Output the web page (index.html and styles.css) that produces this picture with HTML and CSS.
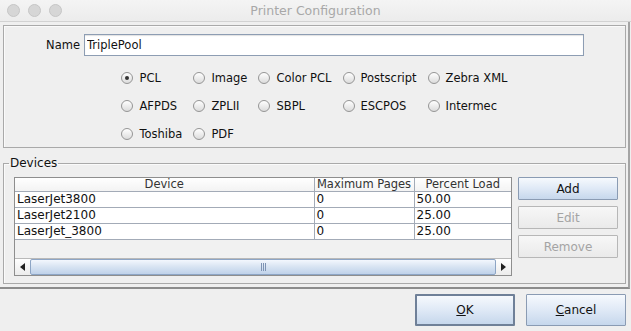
FILE: index.html
```html
<!DOCTYPE html>
<html lang="en">
<head>
  <meta charset="UTF-8">
  <title>Printer Configuration</title>
  <link rel="stylesheet" href="styles.css">
</head>
<body>
  <div class="titlebar">
    <div class="lights">
      <span class="light"></span>
      <span class="light"></span>
      <span class="light"></span>
    </div>
    <div class="title">Printer Configuration</div>
  </div>

  <div class="content">
    <div class="top-panel">
      <div class="name-row">
        <label for="name">Name</label>
        <input type="text" id="name" value="TriplePool">
      </div>
      <div class="formats">
        <div class="opt"><span class="radio checked"></span>PCL</div>
        <div class="opt"><span class="radio"></span>Image</div>
        <div class="opt"><span class="radio"></span>Color PCL</div>
        <div class="opt"><span class="radio"></span>Postscript</div>
        <div class="opt"><span class="radio"></span>Zebra XML</div>
        <div class="opt"><span class="radio"></span>AFPDS</div>
        <div class="opt"><span class="radio"></span>ZPLII</div>
        <div class="opt"><span class="radio"></span>SBPL</div>
        <div class="opt"><span class="radio"></span>ESCPOS</div>
        <div class="opt"><span class="radio"></span>Intermec</div>
        <div class="opt"><span class="radio"></span>Toshiba</div>
        <div class="opt"><span class="radio"></span>PDF</div>
      </div>
    </div>

    <fieldset class="devices">
      <legend>Devices</legend>
      <div class="devices-body">
        <div class="table-box">
          <div class="table-view">
            <table>
              <thead>
                <tr>
                  <th class="col-device">Device</th>
                  <th class="col-pages">Maximum Pages</th>
                  <th class="col-load">Percent Load</th>
                </tr>
              </thead>
              <tbody>
                <tr><td>LaserJet3800</td><td>0</td><td>50.00</td></tr>
                <tr><td>LaserJet2100</td><td>0</td><td>25.00</td></tr>
                <tr><td>LaserJet_3800</td><td>0</td><td>25.00</td></tr>
              </tbody>
            </table>
          </div>
          <div class="hscroll">
            <div class="arrow-btn"><span class="arrow left"></span></div>
            <div class="thumb"><span class="grip"></span></div>
            <div class="arrow-btn"><span class="arrow right"></span></div>
          </div>
        </div>
        <div class="side-buttons">
          <button class="btn btn-blue">Add</button>
          <button class="btn" disabled>Edit</button>
          <button class="btn" disabled>Remove</button>
        </div>
      </div>
    </fieldset>
  </div>

  <div class="bottom-bar">
    <button class="btn btn-blue big default"><u>O</u>K</button>
    <button class="btn btn-blue big"><u>C</u>ancel</button>
  </div>
</body>
</html>
```

FILE: styles.css
```css
body {
  margin: 0;
  width: 631px;
  height: 331px;
  overflow: hidden;
  background-color: #efefef;
  font-family: 'DejaVu Sans', Verdana, sans-serif;
  font-size: 11.5px;
  color: #111;
}

/* Window title bar */
.titlebar {
  height: 21px;
  border-bottom: 1px solid #d2d2d2;
  background: linear-gradient(#f4f4f4, #ececec);
  display: flex;
  align-items: center;
  position: relative;
}

.lights {
  display: flex;
  gap: 8px;
  padding-left: 7px;
}

.light {
  width: 11px;
  height: 11px;
  border-radius: 50%;
  background-color: #d6d6d6;
  border: 1px solid #c6c6c6;
}

.title {
  position: absolute;
  left: 0;
  right: 0;
  text-align: center;
  color: #a8a8a8;
  font-family: 'DejaVu Sans', sans-serif;
  font-size: 12.5px;
}

/* Main content */
.content {
  width: 630px;
  box-sizing: border-box;
  padding: 3px 2px 3px 3px;
  border-right: 2px solid #a4a4a4;
  border-bottom: 2px solid #8c8c8c;
}

.top-panel {
  border: 1px solid #a9a9a9;
  box-shadow: inset 1px 1px 0 #fafafa;
  padding: 8px 0 5px 0;
}

.name-row {
  display: flex;
  align-items: center;
  gap: 4px;
  padding-right: 41px;
}

.name-row label {
  width: 76px;
  text-align: right;
}

.name-row input {
  flex: 1;
  height: 22px;
  box-sizing: border-box;
  border: 1px solid #8d9db3;
  box-shadow: inset 0 1px 1px rgba(0, 0, 0, 0.12);
  padding: 0 2px;
  font-family: inherit;
  font-size: 11.5px;
  color: #111;
  outline: none;
}

.formats {
  display: grid;
  grid-template-columns: repeat(5, auto);
  grid-auto-rows: 16px;
  row-gap: 12px;
  column-gap: 11px;
  justify-content: center;
  margin-top: 14px;
}

.opt {
  display: flex;
  align-items: center;
  gap: 6px;
}

.radio {
  width: 10px;
  height: 10px;
  border-radius: 50%;
  border: 1px solid #959595;
  background: linear-gradient(#ffffff, #dcdcdc);
  position: relative;
}

.radio.checked::after {
  content: '';
  position: absolute;
  left: 3px;
  top: 3px;
  width: 4px;
  height: 4px;
  border-radius: 50%;
  background-color: #333;
}

/* Devices group */
.devices {
  margin: 8px 0 0 0;
  padding: 7px 7px 7px 10px;
  border: 1px solid #a9a9a9;
  box-shadow: inset 1px 1px 0 #fafafa;
  min-width: 0;
}

.devices legend {
  padding: 0 1px;
  margin-left: -5px;
  line-height: 14px;
  font-size: 12px;
}

.devices-body {
  display: flex;
  gap: 6px;
}

.table-box {
  width: 498px;
  height: 99px;
  box-sizing: border-box;
  border: 1px solid #8e8e8e;
  display: flex;
  flex-direction: column;
}

.table-view {
  flex: 1;
  background-color: #f1f1f1;
}

table {
  width: 496px;
  border-collapse: collapse;
  table-layout: fixed;
}

th, td {
  padding: 0 2px;
  border-right: 1px solid #a3abb7;
  border-bottom: 1px solid #a3abb7;
  white-space: nowrap;
  overflow: hidden;
  text-align: left;
  font-weight: normal;
}

th {
  height: 13px;
  line-height: 13px;
  text-align: center;
  color: #333;
  background: linear-gradient(#ffffff, #f3f3f3);
}

td {
  height: 15px;
  line-height: 15px;
  background-color: #fff;
  font-size: 12px;
}

th:last-child, td:last-child {
  border-right: none;
}

.col-device { width: 299px; box-sizing: border-box; }
.col-pages { width: 100px; box-sizing: border-box; }

/* Horizontal scroll bar */
.hscroll {
  height: 16px;
  display: flex;
  border-top: 1px solid #b9b9b9;
  box-sizing: border-box;
  height: 17px;
  background-color: #f6f6f6;
}

.arrow-btn {
  width: 15px;
  display: flex;
  align-items: center;
  justify-content: center;
  background: linear-gradient(#ffffff, #ececec);
}

.arrow {
  width: 0;
  height: 0;
  border-top: 4px solid transparent;
  border-bottom: 4px solid transparent;
}

.arrow.left { border-right: 5px solid #222; }
.arrow.right { border-left: 5px solid #222; }

.thumb {
  flex: 1;
  border: 1px solid #8da5c5;
  border-radius: 2px;
  background: linear-gradient(#f3f7fd, #d7e3f2 50%, #bfd2ea);
  display: flex;
  align-items: center;
  justify-content: center;
}

.grip {
  width: 5px;
  height: 8px;
  background: repeating-linear-gradient(90deg, #7d93b3 0 1px, transparent 1px 2px);
}

/* Buttons */
.side-buttons {
  display: flex;
  flex-direction: column;
  gap: 6px;
}

.btn {
  width: 100px;
  height: 23px;
  padding: 0;
  border: 1px solid #b7b7b7;
  border-radius: 1px;
  background: linear-gradient(#f7f7f7, #eaeaea);
  font-family: inherit;
  font-size: 12px;
  color: #111;
}

.btn:disabled {
  color: #a4a4a4;
}

.btn-blue {
  border-color: #8a9bb3;
  background: linear-gradient(#f6f9fd, #dfe9f6 50%, #c6d7ec);
}

.bottom-bar {
  display: flex;
  justify-content: flex-end;
  gap: 11px;
  padding: 5px 5px 0 0;
}

.btn.big {
  height: 32px;
}

.btn.default {
  border: 2px solid #6f8098;
}
```
